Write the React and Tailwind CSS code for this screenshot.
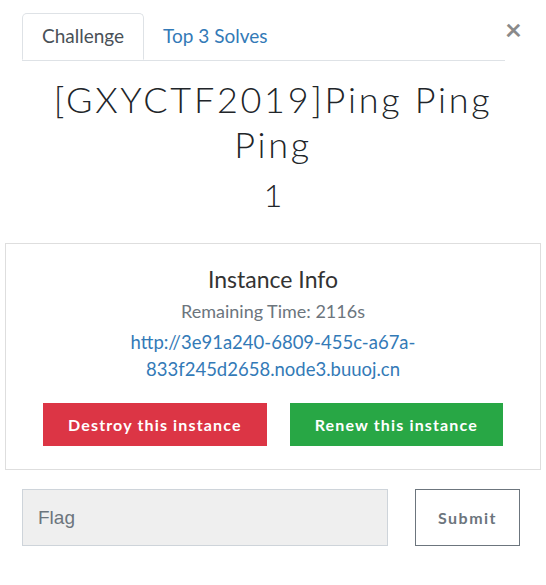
import React from 'react';

const ChallengeModal = () => {
  return (
    <div className="relative w-[546px] h-[585px] bg-white font-['Lato',sans-serif] text-[#212529]">
      {/* Tabs */}
      <div className="pt-[13px] pl-[22px]">
        <ul className="flex w-[483px] border-b border-[#dee2e6]">
          <li className="-mb-px">
            <span className="flex h-[47px] items-center px-[19px] text-[19px] text-[#495057] bg-white border border-[#dee2e6] border-b-white rounded-t-[5px]">
              Challenge
            </span>
          </li>
          <li>
            <span className="flex h-[47px] items-center px-[19px] text-[19px] text-[#337ab7]">
              Top 3 Solves
            </span>
          </li>
        </ul>
      </div>
      <button className="absolute left-[501px] top-[10px] text-[29px] font-bold leading-none text-[#8a8a8a] px-1 py-1">
        ×
      </button>

      {/* Title */}
      <h1 className="mt-[16px] text-center text-[36px] leading-[45px] font-light tracking-[2.7px] text-[#212529]">
        [GXYCTF2019]Ping Ping
        <br />
        Ping
      </h1>
      <h3 className="mt-[9px] text-center text-[32px] leading-[38px] font-light text-[#212529]">1</h3>

      {/* Instance box */}
      <div className="mx-[5px] mt-[29px] border border-[#dedede] pt-[21px] pb-[23px] text-center">
        <h4 className="text-[23px] leading-[29px] text-[#333]">Instance Info</h4>
        <p className="mt-[6px] text-[18px] leading-[23px] text-[#6c757d]">Remaining Time: 2116s</p>
        <p className="mt-[6px] text-[18.5px] leading-[27px]">
          <a className="text-[#337ab7]" href="#">
            http://3e91a240-6809-455c-a67a-
            <br />
            833f245d2658.node3.buuoj.cn
          </a>
        </p>
        <div className="mt-[20px] flex justify-center gap-[23px]">
          <button className="h-[43px] px-[25px] bg-[#dc3545] text-white text-[16px] font-bold tracking-[1.15px]">
            Destroy this instance
          </button>
          <button className="h-[43px] px-[25px] bg-[#28a745] text-white text-[16px] font-bold tracking-[1.15px]">
            Renew this instance
          </button>
        </div>
      </div>

      {/* Flag form */}
      <div className="mt-[19px] flex pl-[22px] gap-[27px]">
        <input
          className="h-[57px] w-[366px] bg-[#efefef] border border-[#ced4da] px-[15px] text-[19px] font-['Liberation_Sans',sans-serif] placeholder:text-[#6c757d] outline-none"
          placeholder="Flag"
        />
        <button className="h-[57px] w-[105px] border-[1.5px] border-[#6c757d] text-[#6c757d] text-[16px] font-bold tracking-[1.5px]">
          Submit
        </button>
      </div>
    </div>
  );
};

export default ChallengeModal;
